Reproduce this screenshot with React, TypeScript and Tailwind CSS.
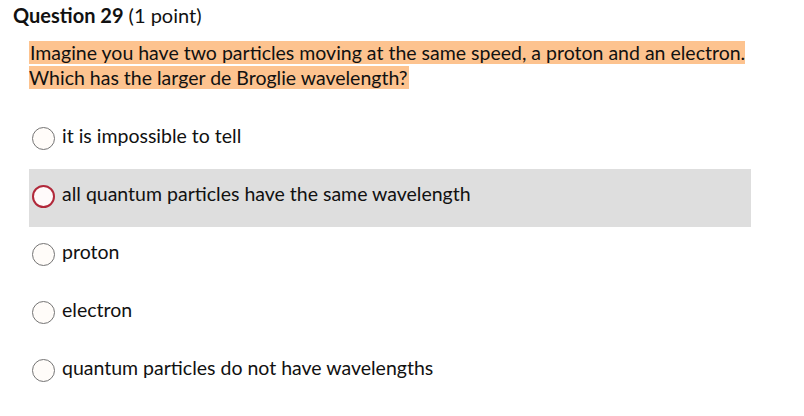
import { useState } from "react";

const options = [
  "it is impossible to tell",
  "all quantum particles have the same wavelength",
  "proton",
  "electron",
  "quantum particles do not have wavelengths",
];

export default function App() {
  const [hovered] = useState(1);

  return (
    <div
      className="w-[804px] h-[416px] bg-white text-[#111] overflow-hidden"
      style={{ fontFamily: "Lato, 'Open Sans', sans-serif" }}
    >
      <div className="pl-[13px] pt-[2px] h-[41px] text-[20px] leading-[26px]">
        <span className="font-bold">Question 29</span> (1 point)
      </div>
      <div className="pl-[29px] w-[800px] text-[19.5px] leading-[24.5px]">
        <span className="bg-[#fdc38f] px-[1px]">
          Imagine you have two particles moving at the same speed, a proton and an electron.
          <br />
          Which has the larger de Broglie wavelength?
        </span>
      </div>
      <div className="mt-[21px] ml-[29px] w-[722px] flex flex-col">
        {options.map((opt, i) => (
          <div
            key={i}
            className={`h-[58px] flex items-center gap-[7px] pl-[3px] pb-[4px] ${
              hovered === i ? "bg-[#dedede]" : ""
            }`}
          >
            <span
              className={`w-[23px] h-[23px] rounded-full shrink-0 ${
                hovered === i
                  ? "border-2 border-[#b1283a] bg-[#fffafa]"
                  : "border border-[#747474] bg-[#fffcf9]"
              }`}
            />
            <span className="text-[19.5px] leading-[24px] mb-[4px]">{opt}</span>
          </div>
        ))}
      </div>
    </div>
  );
}
